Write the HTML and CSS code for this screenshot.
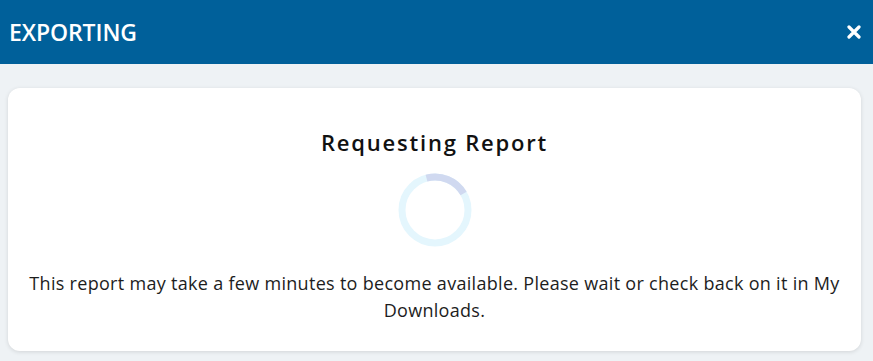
FILE: index.html
```html
<!DOCTYPE html>
<html lang="en">
<head>
  <meta charset="UTF-8">
  <title>Exporting</title>
  <link rel="stylesheet" href="styles.css">
</head>
<body>

  <div class="modal">
    <div class="modal-header">
      <h1>EXPORTING</h1>
      <button class="close" aria-label="Close">
        <svg width="14" height="14" viewBox="0 0 14 14">
          <path d="M2 2 L12 12 M12 2 L2 12" stroke="#fff" stroke-width="3.2" stroke-linecap="round"/>
        </svg>
      </button>
    </div>

    <div class="modal-body">
      <div class="card">
        <h2>Requesting Report</h2>
        <svg class="spinner" width="74" height="74" viewBox="0 0 74 74">
          <circle cx="37" cy="37" r="33" fill="none" stroke="#e4f6fd" stroke-width="7"/>
          <path d="M28.5 5.1 A33 33 0 0 1 65.6 20.5" fill="none" stroke="#d0d9f0" stroke-width="7"/>
        </svg>
        <p>This report may take a few minutes to become available. Please wait or check back on it in My Downloads.</p>
      </div>
    </div>
  </div>

</body>
</html>
```

FILE: styles.css
```css
body {
  margin: 0;
  background: #eef2f5;
  font-family: 'Open Sans', 'Noto Sans', sans-serif;
}

.modal-header {
  background: #00609a;
  height: 64px;
  display: flex;
  align-items: center;
  justify-content: space-between;
  padding: 0 12px 0 9px;
}

.modal-header h1 {
  margin: 0;
  color: #fff;
  font-size: 23px;
  font-weight: 600;
  letter-spacing: -0.1px;
}

.close {
  background: none;
  border: none;
  padding: 0;
  display: flex;
  cursor: pointer;
}

.modal-body {
  padding: 24px 12px 10px 8px;
}

.card {
  background: #fff;
  border-radius: 12px;
  box-shadow: 0 1px 4px rgba(0, 0, 0, 0.12);
  text-align: center;
  padding: 39px 16px 27px;
}

.card h2 {
  margin: 0;
  font-size: 22px;
  line-height: 30px;
  font-weight: 600;
  letter-spacing: 1.8px;
  color: #111;
}

.spinner {
  display: block;
  margin: 16px auto 23px;
}

.card p {
  margin: 0;
  font-size: 18px;
  line-height: 27px;
  letter-spacing: 0.3px;
  color: #1d1d1d;
}
```
